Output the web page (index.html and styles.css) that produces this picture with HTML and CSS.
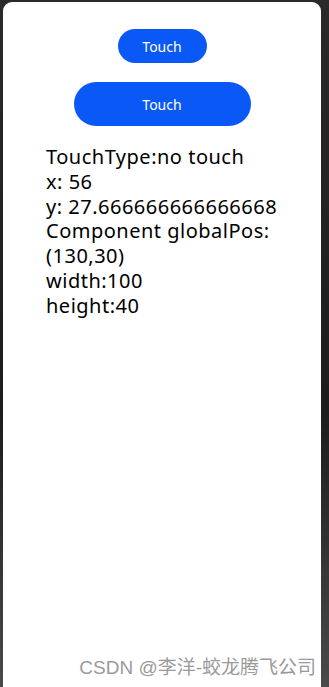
FILE: index.html
```html
<!DOCTYPE html>
<html>
<head>
<meta charset="utf-8">
<link rel="stylesheet" href="styles.css">
</head>
<body>
<div class="frame">
  <div class="card">
    <div class="btn btn-small">Touch</div>
    <div class="btn btn-large">Touch</div>
    <div class="info">
      <div>TouchType:no touch</div>
      <div>x: 56</div>
      <div>y: 27.666666666666668</div>
      <div>Component globalPos:</div>
      <div>(130,30)</div>
      <div>width:100</div>
      <div>height:40</div>
    </div>
    <div class="spacer"></div>
    <div class="watermark">CSDN @李洋-蛟龙腾飞公司</div>
  </div>
</div>
</body>
</html>
```
FILE: styles.css
```css
html, body {
  margin: 0;
  padding: 0;
  width: 329px;
  height: 687px;
  overflow: hidden;
}
body {
  background: linear-gradient(to bottom, #2a2a2a 0%, #1c1c1c 60%, #4a4a4a 100%);
}
.frame {
  padding: 2px 8px 0 3px;
  height: 685px;
}
.card {
  background: #ffffff;
  height: 685px;
  border-radius: 9px 9px 0 0;
  display: flex;
  flex-direction: column;
  align-items: center;
  font-family: "Noto Sans", "Noto Sans CJK SC", sans-serif;
}
.btn {
  background: #0a59f7;
  color: #ffffff;
  display: flex;
  align-items: center;
  justify-content: center;
  font-size: 14px;
  border-radius: 22px;
}
.btn-small {
  margin-top: 27px;
  width: 89px;
  height: 34px;
}
.btn-large {
  margin-top: 19px;
  width: 177px;
  height: 44px;
}
.info {
  align-self: flex-start;
  margin-left: 43px;
  margin-top: 19px;
  font-size: 20px;
  letter-spacing: 0.5px;
  line-height: 24.8px;
  color: #000000;
}
.spacer {
  flex: 1;
}
.watermark {
  align-self: flex-end;
  margin-right: 5px;
  margin-bottom: 8px;
  font-family: "Liberation Sans", "Noto Sans CJK SC", sans-serif;
  font-size: 19px;
  color: #9a9a9a;
}
```
